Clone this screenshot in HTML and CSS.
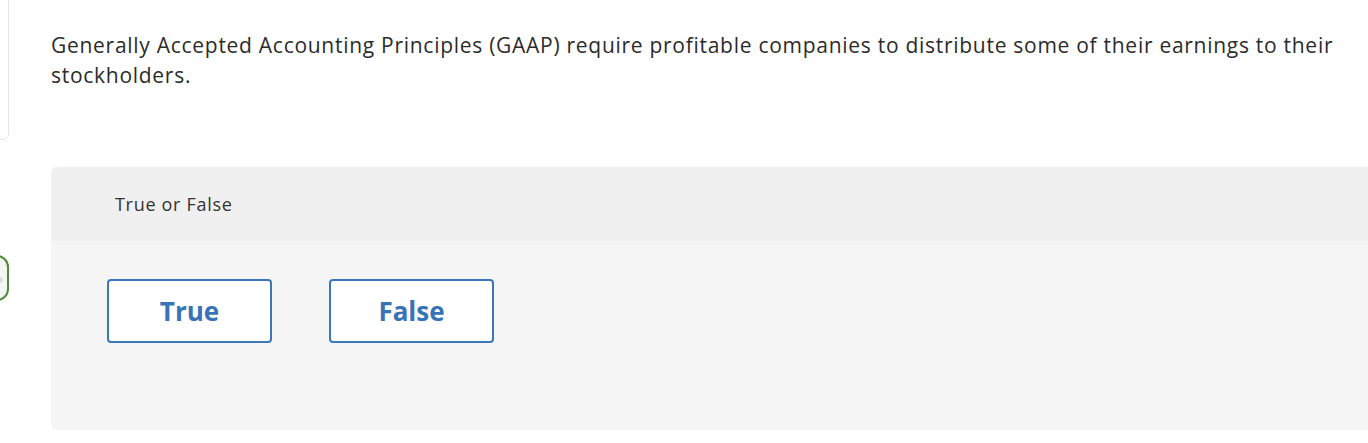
FILE: index.html
```html
<!DOCTYPE html>
<html lang="en">
<head>
<meta charset="utf-8">
<title>True or False</title>
<link rel="stylesheet" href="styles.css">
</head>
<body>
<div class="page">
  <aside class="rail">
    <div class="rail-card"></div>
    <div class="rail-pill"><span class="pill-glyph">›</span></div>
  </aside>
  <main class="main">
    <p class="question">Generally Accepted Accounting Principles (GAAP) require profitable companies to distribute some of their earnings to their stockholders.</p>
    <section class="answer-panel">
      <div class="panel-header">True or False</div>
      <div class="panel-body">
        <button class="choice" type="button">True</button>
        <button class="choice" type="button">False</button>
      </div>
    </section>
  </main>
</div>
</body>
</html>
```

FILE: styles.css
```css
html, body {
  margin: 0;
  padding: 0;
  background: #ffffff;
}
body {
  font-family: "Open Sans", "Lato", sans-serif;
  color: #2b2b2b;
  width: 1368px;
  height: 443px;
  overflow: hidden;
}
.page {
  display: flex;
  align-items: flex-start;
}
.rail {
  width: 9px;
  flex: 0 0 9px;
  overflow: hidden;
  display: flex;
  flex-direction: column;
}
.rail-card {
  width: 60px;
  height: 150px;
  margin-top: -10px;
  margin-left: -51px;
  border: 1px solid #e6e6e6;
  border-radius: 6px;
  box-sizing: border-box;
}
.rail-pill {
  width: 40px;
  height: 46px;
  margin-top: 115px;
  margin-left: -31px;
  border: 2px solid #4f8a3b;
  border-radius: 12px;
  background: #f4f6f4;
  box-sizing: border-box;
  display: flex;
  align-items: center;
  justify-content: flex-end;
  padding-right: 4px;
  color: #c8c8c8;
  font-size: 14px;
}
.main {
  margin-left: 42px;
  flex: 1 1 auto;
}
.question {
  margin: 30px 0 0 0;
  font-size: 21px;
  line-height: 30px;
  letter-spacing: 0.72px;
  color: #2b2b2b;
  padding-right: 20px;
}
.answer-panel {
  margin-top: 77px;
  border-radius: 6px 0 0 6px;
  overflow: hidden;
}
.panel-header {
  background: #f0f0f0;
  height: 74px;
  box-sizing: border-box;
  padding-left: 64px;
  display: flex;
  align-items: center;
  font-size: 18px;
  letter-spacing: 0.7px;
  color: #333333;
}
.panel-body {
  background: #f5f5f5;
  height: 189px;
  box-sizing: border-box;
  padding: 38px 0 0 56px;
  display: flex;
  align-items: flex-start;
  gap: 57px;
}
.choice {
  width: 165px;
  height: 64px;
  box-sizing: border-box;
  border: 2px solid #3a77bd;
  border-radius: 4px;
  background: #ffffff;
  color: #3873b8;
  font-family: "Open Sans", "Lato", sans-serif;
  font-weight: 700;
  font-size: 26px;
  padding: 0;
  cursor: pointer;
}
```
